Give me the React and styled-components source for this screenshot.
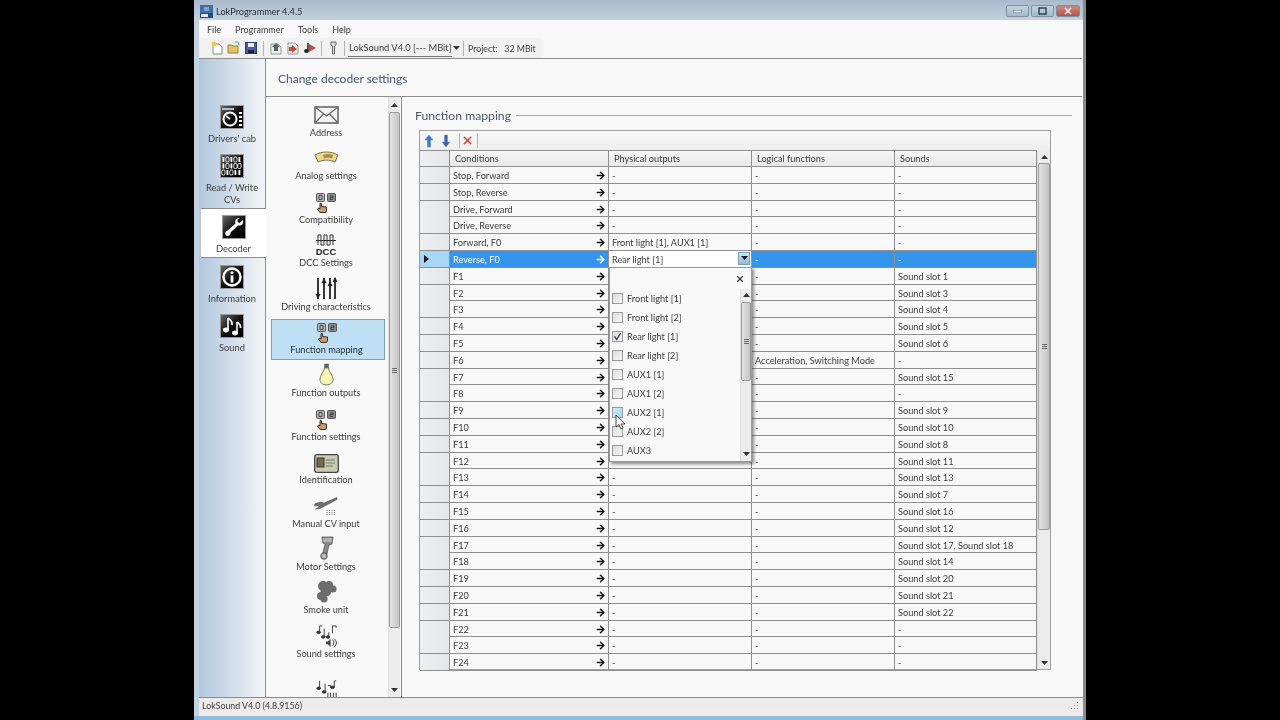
import styled, { createGlobalStyle } from 'styled-components'
import { ArrowRight, X } from 'lucide-react'

const Global = createGlobalStyle`
  html, body { margin: 0; padding: 0; background: #000; }
  body { font-family: Lato, "Open Sans", sans-serif; font-size: 9.2px; color: #3c3c3c; overflow: hidden; }
`

const Page = styled.div`
  width: 1280px;
  height: 720px;
  background: #000;
  display: flex;
  justify-content: center;
  filter: blur(0.35px);
`

const Window = styled.div`
  width: 892px;
  height: 720px;
  display: flex;
  flex-direction: column;
  background: linear-gradient(180deg, #a9bacd 0, #c3d1e0 20px);
  border-right: 3px solid #8a8a8a;
  box-sizing: border-box;
`

const TitleBar = styled.div`
  height: 20px;
  box-sizing: border-box;
  display: flex;
  align-items: center;
  padding: 3px 3px 0 6px;
  flex: none;
`

const TitleText = styled.div`
  margin-left: 3px;
  font-size: 9.2px;
  color: #26303c;
`

const WinButtons = styled.div`
  margin-left: auto;
  display: flex;
  gap: 2px;
  margin-top: -1px;
`

const WinButton = styled.div`
  width: ${p => (p.$close ? 24 : 23)}px;
  height: 12px;
  border: 1px solid #7d90a2;
  border-radius: 2px;
  box-sizing: border-box;
  background: ${p => (p.$close ? 'linear-gradient(180deg,#c98c84,#b3534a)' : 'linear-gradient(180deg,#c3d2e0,#a5b9cb)')};
  display: flex;
  align-items: center;
  justify-content: center;
`

const Inner = styled.div`
  flex: 1;
  margin: 0 0 4px 5px;
  display: flex;
  flex-direction: column;
  background: #f8f8f9;
  min-height: 0;
`

const MenuBar = styled.div`
  height: 18px;
  display: flex;
  align-items: center;
  gap: 14px;
  padding-left: 8px;
  flex: none;
  font-size: 9px;
`

const ToolStrip = styled.div`
  height: 20px;
  flex: none;
  display: flex;
  align-items: center;
  background: linear-gradient(90deg, #f1f1f1 0, #f1f1f1 342px, #f8f8f9 346px);
`

const ToolIcons = styled.div`
  display: flex;
  align-items: center;
  gap: 3px;
  padding-left: 11px;
`

const ToolSep = styled.div`
  width: 1px;
  height: 15px;
  background: #b4b4b4;
  flex: none;
  margin: 0 ${p => p.$r ?? 0}px 0 ${p => p.$l ?? 0}px;
`

const Combo = styled.div`
  margin-left: 3px;
  display: flex;
  align-items: center;
  gap: 1px;
  width: 112px;
  white-space: nowrap;
`

const ComboText = styled.div`
  width: 106px;
  height: 17px;
  line-height: 16px;
  border-bottom: 1px solid #777;
  box-sizing: border-box;
  padding-left: 1px;
  font-size: 9.3px;
`

const ProjectText = styled.span`
  font-size: 8.8px;
`

const Body = styled.div`
  flex: 1;
  display: flex;
  min-height: 0;
  margin-right: 1px;
  border-top: 1px solid #8c8c8c;
  background: linear-gradient(90deg, #b2c7de 0, #d3dfea 34px, #f2f5f8 66px);
`

const Nav = styled.div`
  width: 66px;
  flex: none;
  padding-top: 43px;
  display: flex;
  flex-direction: column;
  box-sizing: border-box;
`

const NavItem = styled.div`
  display: flex;
  flex-direction: column;
  align-items: center;
  text-align: center;
  height: ${p => p.$h}px;
  line-height: 12px;
  font-size: 9.3px;
  padding-top: ${p => p.$pad}px;
  box-sizing: border-box;
  margin-left: ${p => (p.$active ? 2 : 0)}px;
  margin-right: ${p => (p.$active ? -1 : 0)}px;
  position: relative;
  z-index: 1;
  ${p => p.$active && `
    background: #fff;
    border-top: 1px solid #8c8c8c;
    border-bottom: 1px solid #8c8c8c;
  `}
`

const NavLabel = styled.div`
  margin-top: 4px;
  width: 62px;
`

const MainCol = styled.div`
  flex: 1;
  display: flex;
  flex-direction: column;
  min-width: 0;
  background: #f8f8f9;
  border-left: 1px solid #8c8c8c;
`

const PageHeader = styled.div`
  height: 38px;
  flex: none;
  display: flex;
  align-items: center;
  padding: 2px 0 0 12px;
  box-sizing: border-box;
  font-size: 12px;
  color: #4a566c;
  border-bottom: 1px solid #8c8c8c;
`

const Split = styled.div`
  flex: 1;
  display: flex;
  min-height: 0;
`

const SettingsCol = styled.div`
  width: 136px;
  box-sizing: border-box;
  flex: none;
  display: flex;
  padding-right: 1px;
  border-right: 1px solid #8c8c8c;
  overflow: hidden;
  position: relative;
`

const SettingsList = styled.div`
  width: 122px;
  flex: none;
  padding: 5px 0 0 5px;
  display: flex;
  flex-direction: column;
  gap: 2.4px;
  box-sizing: border-box;
`

const SettingItem = styled.div`
  height: 41px;
  width: 114px;
  flex: none;
  box-sizing: border-box;
  display: flex;
  flex-direction: column;
  align-items: center;
  justify-content: flex-end;
  font-size: 9.2px;
  line-height: 12px;
  padding: 0 4px 4px 0;
  position: relative;
  ${p => p.$selected && `
    background: #bfdff5;
    border: 1px solid #7da2b8;
    padding: 0 3px 3px 0;
    color: #20303c;
  `}
`

const SettingIcon = styled.div`
  height: 24px;
  display: flex;
  align-items: flex-end;
  justify-content: center;
  margin-bottom: 1px;
`

const ScrollTrack = styled.div`
  width: ${p => p.$w}px;
  flex: none;
  display: flex;
  flex-direction: column;
  align-items: center;
  background: #ececec;
  border-left: 1px solid #dedede;
  box-sizing: border-box;
`

const ScrollBtn = styled.div`
  height: ${p => p.$h || 12}px;
  flex: none;
  width: 100%;
  display: flex;
  align-items: center;
  justify-content: center;
`

const ScrollGap = styled.div`
  flex: 1;
  width: 100%;
`

const Thumb = styled.div`
  flex: none;
  width: 100%;
  height: ${p => p.$h}px;
  background: linear-gradient(90deg, #e3e3e3, #c4c4c4);
  border: 1px solid #9a9a9a;
  border-radius: 2px;
  box-sizing: border-box;
  display: flex;
  align-items: center;
  justify-content: center;
`

const Grip = styled.div`
  width: 5px;
  height: 5px;
  border-top: 1px solid #666;
  border-bottom: 1px solid #666;
  position: relative;
  box-sizing: border-box;
  &::after {
    content: '';
    position: absolute;
    left: 0;
    right: 0;
    top: 1px;
    height: 1px;
    background: #666;
  }
`

const Content = styled.div`
  flex: 1;
  min-width: 0;
  padding: 9px 10px 0 13px;
  display: flex;
  flex-direction: column;
`

const GroupTitle = styled.div`
  display: flex;
  align-items: center;
  font-size: 12.2px;
  height: 18px;
  color: #4a566c;
  gap: 5px;
  &::after {
    content: '';
    flex: 1;
    height: 1px;
    background: #a8a8a8;
  }
`

const TableBox = styled.div`
  margin: 6px 0 0 4px;
  height: 540px;
  width: 632px;
  box-sizing: border-box;
  border: 1px solid #a0a0a0;
  background: #f1f1f1;
  display: flex;
  flex-direction: column;
`

const TableTools = styled.div`
  height: 19px;
  flex: none;
  display: flex;
  align-items: center;
  background: linear-gradient(180deg, #f8f8f8, #eeeeee);
`

const ToolBtn = styled.div`
  width: ${p => p.$w}px;
  flex: none;
  display: flex;
  align-items: center;
  justify-content: center;
`

const TableWrap = styled.div`
  flex: 1;
  display: flex;
  min-height: 0;
`

const Grid = styled.div`
  width: 617px;
  flex: none;
  background: #f8f8f9;
  border-top: 1px solid #8f8f8f;
`

const Row = styled.div`
  display: grid;
  grid-template-columns: 30px 159px 143px 143px 142px;
  height: ${p => (p.$head ? 16 : 16.8)}px;
  box-sizing: border-box;
  border-bottom: 1px solid #8f8f8f;
  color: ${p => (p.$active ? '#fff' : 'inherit')};
  background: ${p => (p.$active ? '#3595ec' : 'transparent')};
  line-height: 15px;
  font-size: 9.2px;
  position: relative;
`

const Cell = styled.div`
  border-right: 1px solid #8f8f8f;
  padding: 1px 0 0 3px;
  display: flex;
  align-items: center;
  justify-content: space-between;
  white-space: nowrap;
  position: relative;
  min-width: 0;
`

const HeadCell = styled(Cell)`
  background: linear-gradient(180deg, #f6f6f6, #e8e8e8);
  padding: 0 0 0 5px;
`

const RowHead = styled.div`
  border-right: 1px solid #8f8f8f;
  background: ${p => (p.$active ? '#a9d6f2' : 'linear-gradient(90deg,#eeeff0,#e4e6e7)')};
  display: flex;
  align-items: center;
  padding-left: 4px;
`

const CondArrow = styled(ArrowRight)`
  margin-right: 2px;
  flex: none;
  color: ${p => (p.$active ? '#fff' : '#111')};
`

const EditBox = styled.div`
  position: absolute;
  inset: 0 0 0 0;
  background: #fff;
  color: #3c3c3c;
  display: flex;
  align-items: center;
  padding: 1px 0 0 3px;
`

const EditBtn = styled.div`
  position: absolute;
  right: 1px;
  top: 1px;
  width: 12px;
  height: 13px;
  box-sizing: border-box;
  border: 1px solid #7a9db8;
  background: linear-gradient(180deg, #cfe5f4, #8dbbdc);
  display: flex;
  align-items: center;
  justify-content: center;
`

const Popup = styled.div`
  position: absolute;
  left: 0;
  top: 16px;
  width: 143px;
  height: 195px;
  background: #f8f8f9;
  border: 1px solid #9a9a9a;
  box-sizing: border-box;
  box-shadow: 2px 2px 3px rgba(0, 0, 0, 0.45);
  z-index: 5;
  color: #3c3c3c;
  display: flex;
  flex-direction: column;
`

const PopupTop = styled.div`
  height: 21px;
  flex: none;
  display: flex;
  justify-content: flex-end;
  align-items: center;
  padding: 2px 6px 0 0;
  box-sizing: border-box;
`

const PopupBody = styled.div`
  flex: 1;
  display: flex;
  min-height: 0;
`

const PopupList = styled.div`
  flex: 1;
  padding: 0 0 0 2px;
  display: flex;
  flex-direction: column;
  overflow: hidden;
`

const PopupItem = styled.div`
  height: 19px;
  flex: none;
  display: flex;
  align-items: center;
  gap: 4px;
`

const Check = styled.div`
  width: 11px;
  height: 11px;
  box-sizing: border-box;
  border: 1px solid #9b9b9b;
  background: ${p => (p.$hover ? 'linear-gradient(135deg,#cfe9f7,#a8d6ef)' : 'linear-gradient(135deg,#dcdcdc,#f6f6f6)')};
  flex: none;
  display: flex;
  align-items: center;
  justify-content: center;
`

const Cursor = styled.svg`
  position: absolute;
  left: 5px;
  top: 146px;
  z-index: 6;
`

const StatusBar = styled.div`
  height: 19px;
  flex: none;
  border-top: 1px solid #8c8c8c;
  background: linear-gradient(180deg, #ecebeb, #f3eaea);
  display: flex;
  align-items: center;
  padding: 0 0 3px 3px;
  box-sizing: border-box;
  font-size: 8.8px;
  position: relative;
`

const SizeGrip = styled.svg`
  margin-left: auto;
  margin-right: 4px;
`

const BottomEdge = styled.div`
  height: 4px;
  flex: none;
  margin-top: -4px;
  background: #8fbddb;
`

// --- drawings ---

const Tile = ({ children }) => (
  <svg width="24" height="24" viewBox="0 0 24 24">
    <defs>
      <linearGradient id="tile" x1="0" y1="0" x2="1" y2="1">
        <stop offset="0" stopColor="#6a6a6a" />
        <stop offset="0.5" stopColor="#111" />
        <stop offset="1" stopColor="#000" />
      </linearGradient>
    </defs>
    <rect x="0.5" y="0.5" width="23" height="23" fill="url(#tile)" stroke="#999" />
    {children}
  </svg>
)

const CabIcon = () => (
  <Tile>
    <rect x="2" y="3" width="12" height="2" fill="#bbb" />
    <circle cx="10" cy="14" r="6.5" fill="none" stroke="#fff" strokeWidth="2" />
    <path d="M10 14 L6 11" stroke="#fff" strokeWidth="1.6" />
    <path d="M19 8h3M19 12h3M19 16h3M19 20h3" stroke="#fff" strokeWidth="2" />
  </Tile>
)

const BinaryIcon = () => {
  const rows = ['10101', '10100', '01011']
  return (
    <Tile>
      {rows.map((r, y) =>
        r.split('').map((c, x) => (
          c === '1'
            ? <rect key={`${x}${y}`} x={2.5 + x * 4} y={3 + y * 6.5} width="1.8" height="5" fill="#fff" />
            : <rect key={`${x}${y}`} x={1.8 + x * 4} y={3 + y * 6.5} width="3.2" height="5" rx="1.2" fill="none" stroke="#fff" strokeWidth="0.9" />
        ))
      )}
    </Tile>
  )
}

const WrenchTile = () => (
  <Tile>
    <path d="M21 5 L17.5 8 L15.5 7 L15.5 4.5 L18 3 C14.5 2.5 12.5 5 13.5 8.5 L5 16 C2.5 16.5 2.5 20.5 5.5 21 C8 21 9 19 8.5 17.5 L16 10.5 C19.5 11 22 9 21 5 Z" fill="#fff" />
  </Tile>
)

const InfoTile = () => (
  <Tile>
    <circle cx="12" cy="12" r="8.5" fill="none" stroke="#fff" strokeWidth="2.4" />
    <circle cx="12" cy="7.8" r="1.5" fill="#fff" />
    <rect x="10.6" y="10.5" width="2.8" height="7" fill="#fff" />
  </Tile>
)

const SoundTile = () => (
  <Tile>
    <path d="M8 4 L8 15 M8 4 C10 6 13 7 12 11 M17 8 L17 18 M17 8 C19 10 21 10 20.5 14" stroke="#fff" strokeWidth="1.6" fill="none" />
    <ellipse cx="6" cy="16" rx="3" ry="2.4" fill="#fff" />
    <ellipse cx="15" cy="19" rx="3" ry="2.4" fill="#fff" />
  </Tile>
)

const Envelope = () => (
  <svg width="25" height="20" viewBox="0 0 25 20">
    <rect x="1" y="1" width="23" height="16" fill="#f4f4f4" stroke="#555" strokeWidth="1.4" />
    <path d="M1 1 L12.5 10 L24 1 M1 17 L9.5 8 M24 17 L15.5 8" fill="none" stroke="#666" strokeWidth="1.3" />
  </svg>
)

const AnalogIcon = () => (
  <svg width="25" height="18" viewBox="0 0 25 18">
    <path d="M1 4 C7 0 18 0 24 4 L21 11 C16 8.5 9 8.5 4 11 Z" fill="#e8dc8c" stroke="#77714a" />
    <path d="M9 4 C12 2.5 15 2.5 19 4 L18 7.5 C15 6.5 12 6.5 10 7.5 Z" fill="#a98d54" />
  </svg>
)

const FnIcon = () => (
  <svg width="20" height="20" viewBox="0 0 20 20">
    <rect x="0.5" y="0.5" width="8" height="8" rx="1" fill="#b5b5b5" stroke="#555" />
    <rect x="11.5" y="0.5" width="8" height="8" rx="1" fill="#8a8a8a" stroke="#555" />
    <path d="M3 2.5h3v4H3zM14 3h3M17 3v1.5h-3v2h3" stroke="#333" fill="none" strokeWidth="0.8" />
    <path d="M4 10.5 L5.5 10.5 L5.5 13.5 L10.5 14 L10.5 18 L9.5 19.5 L4 19.5 L1.5 16 L3 15 L4 16 Z" fill="#c99a6e" stroke="#3d2f25" />
  </svg>
)

const DccIcon = () => (
  <svg width="22" height="24" viewBox="0 0 22 24">
    <path d="M1 8.5 H21" stroke="#333" />
    <path d="M3 13 V3 H6 V13 H9 V3 H12 V13 H15 V3 H18 V13" fill="none" stroke="#333" />
    <text x="11" y="23" textAnchor="middle" fontFamily="Liberation Sans" fontWeight="700" fontSize="9.5" fill="#222">DCC</text>
  </svg>
)

const SlidersIcon = () => (
  <svg width="24" height="23" viewBox="0 0 24 23">
    <path d="M4 1 V22 M10 1 V22 M16 1 V22 M21 1 V22" stroke="#222" strokeWidth="1.8" />
    <path d="M1.5 17 L6.5 17 L4 22 Z M7.5 6 L12.5 6 L10 1 Z M13.5 9 L18.5 9 L16 4 Z M18.5 5 L23.5 5 L21 0 Z" fill="#222" />
  </svg>
)

const BulbIcon = () => (
  <svg width="15" height="23" viewBox="0 0 16 24">
    <rect x="5.5" y="0.5" width="5" height="5" fill="#666" />
    <path d="M6 5 L10 5 C10.5 9 15 13 15 17 C15 21 12 23 8 23 C4 23 1 21 1 17 C1 13 5.5 9 6 5 Z" fill="#f7f4b4" stroke="#6d6d52" />
  </svg>
)

const IdIcon = () => (
  <svg width="25" height="19" viewBox="0 0 25 19">
    <rect x="0.7" y="0.7" width="23.6" height="17.6" rx="2" fill="#c9ccb2" stroke="#444" strokeWidth="1.3" />
    <rect x="3" y="4" width="7" height="9" fill="#7a6a4a" stroke="#333" />
    <path d="M12 6h9M12 9h9M12 12h7" stroke="#777" />
  </svg>
)

const ManualIcon = () => (
  <svg width="24" height="20" viewBox="0 0 24 20">
    <path d="M23 0.5 L10 6 L7 5 L1 6.5 L0.5 9 L4 8.5 L5 10 L1.5 12 L6 11.5 L9 10 L23 2.5 Z" fill="#6e6e6e" stroke="#444" strokeWidth="0.5" />
    <path d="M13 13v6M15.5 13v6M18 13v6M20.5 13v6" stroke="#777" strokeDasharray="1 1" />
  </svg>
)

const PistonIcon = () => (
  <svg width="15" height="24" viewBox="0 0 15 24">
    <path d="M3 1 H14 L13 8 L10 9 L8 18 L4 17 L6 8 L4 7 Z" fill="#8a8a8a" stroke="#444" strokeWidth="0.7" />
    <circle cx="5" cy="20" r="3.2" fill="#bbb" stroke="#444" />
    <path d="M4 3h9M4 5h9" stroke="#ddd" />
  </svg>
)

const SmokeIcon = () => (
  <svg width="22" height="23" viewBox="0 0 22 23">
    <g fill="#6d6d6d">
      <circle cx="8" cy="6" r="5" />
      <circle cx="14" cy="5" r="4" />
      <circle cx="18" cy="9" r="3.6" />
      <circle cx="11" cy="11" r="5.5" />
      <circle cx="6" cy="16" r="4" />
      <circle cx="9" cy="19" r="3.6" />
    </g>
  </svg>
)

const NotesIcon = () => (
  <svg width="23" height="22" viewBox="0 0 23 24">
    <g stroke="#333" fill="#333" strokeWidth="1">
      <path d="M4 1v6M4 1h3M9 4v9M18 1v8M18 1h4v2M14 8v5" fill="none" />
      <ellipse cx="3" cy="8" rx="2" ry="1.4" />
      <ellipse cx="8" cy="13" rx="2" ry="1.4" />
      <ellipse cx="13" cy="13" rx="2" ry="1.4" />
    </g>
    <path d="M11 18h2l3-3v9l-3-3h-2z" fill="#444" />
    <path d="M18 16c2 2 2 5 0 7M20 15c3 3 3 6 0 9" stroke="#333" fill="none" />
  </svg>
)

const NotesMixIcon = () => (
  <svg width="23" height="22" viewBox="0 0 23 24">
    <g stroke="#333" fill="#333" strokeWidth="1">
      <path d="M4 1v8M20 1v7M20 1h2" fill="none" />
      <ellipse cx="3" cy="9" rx="2" ry="1.4" />
      <ellipse cx="9" cy="13" rx="2" ry="1.4" />
      <ellipse cx="18" cy="8" rx="2" ry="1.4" />
      <path d="M10 4v8M13 6h3v3" fill="none" />
      <path d="M13 14v10M16 14v10M19 14v10M22 14v10" fill="none" />
    </g>
  </svg>
)

const Tri = ({ down, color = '#333' }) => (
  <svg width="7" height="4" viewBox="0 0 7 4">
    <path d={down ? 'M0 0H7L3.5 4Z' : 'M0 4H7L3.5 0Z'} fill={color} />
  </svg>
)

const Tb = ({ children, w = 14 }) => (
  <svg width={w} height="14" viewBox={`0 0 ${w} 14`}>{children}</svg>
)

const AppIcon = () => (
  <svg width="13" height="13" viewBox="0 0 13 13">
    <rect width="13" height="13" fill="#3f6f9f" />
    <rect y="8" width="13" height="5" fill="#1f4f77" />
    <rect x="4" y="2" width="5" height="4" fill="#7fa6c9" />
    <rect x="1" y="9" width="7" height="3" fill="#dfe9f2" />
  </svg>
)

const navItems = [
  { label: "Drivers' cab", icon: <CabIcon />, h: 49, pad: 3 },
  { label: 'Read / Write CVs', icon: <BinaryIcon />, h: 57, pad: 3 },
  { label: 'Decoder', icon: <WrenchTile />, h: 50, pad: 6, active: true },
  { label: 'Information', icon: <InfoTile />, h: 50, pad: 7 },
  { label: 'Sound', icon: <SoundTile />, h: 50, pad: 6 },
]

const settings = [
  { label: 'Address', icon: <Envelope /> },
  { label: 'Analog settings', icon: <AnalogIcon /> },
  { label: 'Compatibility', icon: <FnIcon /> },
  { label: 'DCC Settings', icon: <DccIcon /> },
  { label: 'Driving characteristics', icon: <SlidersIcon /> },
  { label: 'Function mapping', icon: <FnIcon />, selected: true },
  { label: 'Function outputs', icon: <BulbIcon /> },
  { label: 'Function settings', icon: <FnIcon /> },
  { label: 'Identification', icon: <IdIcon /> },
  { label: 'Manual CV input', icon: <ManualIcon /> },
  { label: 'Motor Settings', icon: <PistonIcon /> },
  { label: 'Smoke unit', icon: <SmokeIcon /> },
  { label: 'Sound settings', icon: <NotesIcon /> },
  { label: '', icon: <NotesMixIcon /> },
]

const rows = [
  ['Stop, Forward', '-', '-', '-'],
  ['Stop, Reverse', '-', '-', '-'],
  ['Drive, Forward', '-', '-', '-'],
  ['Drive, Reverse', '-', '-', '-'],
  ['Forward, F0', 'Front light [1], AUX1 [1]', '-', '-'],
  ['Reverse, F0', 'Rear light [1]', '-', '-'],
  ['F1', '', '-', 'Sound slot 1'],
  ['F2', '', '-', 'Sound slot 3'],
  ['F3', '', '-', 'Sound slot 4'],
  ['F4', '', '-', 'Sound slot 5'],
  ['F5', '', '-', 'Sound slot 6'],
  ['F6', '', 'Acceleration, Switching Mode', '-'],
  ['F7', '', '-', 'Sound slot 15'],
  ['F8', '', '-', '-'],
  ['F9', '', '-', 'Sound slot 9'],
  ['F10', '', '-', 'Sound slot 10'],
  ['F11', '', '-', 'Sound slot 8'],
  ['F12', '', '-', 'Sound slot 11'],
  ['F13', '-', '-', 'Sound slot 13'],
  ['F14', '-', '-', 'Sound slot 7'],
  ['F15', '-', '-', 'Sound slot 16'],
  ['F16', '-', '-', 'Sound slot 12'],
  ['F17', '-', '-', 'Sound slot 17, Sound slot 18'],
  ['F18', '-', '-', 'Sound slot 14'],
  ['F19', '-', '-', 'Sound slot 20'],
  ['F20', '-', '-', 'Sound slot 21'],
  ['F21', '-', '-', 'Sound slot 22'],
  ['F22', '-', '-', '-'],
  ['F23', '-', '-', '-'],
  ['F24', '-', '-', '-'],
]

const outputs = ['Front light [1]', 'Front light [2]', 'Rear light [1]', 'Rear light [2]', 'AUX1 [1]', 'AUX1 [2]', 'AUX2 [1]', 'AUX2 [2]', 'AUX3']

const App = () => (
  <>
    <Global />
    <Page>
      <Window>
        <TitleBar>
          <AppIcon />
          <TitleText>LokProgrammer 4.4.5</TitleText>
          <WinButtons>
            <WinButton>
              <svg width="9" height="3"><rect width="9" height="3" fill="#e8eef4" stroke="#5a6c7c" /></svg>
            </WinButton>
            <WinButton>
              <svg width="9" height="8"><rect x="1" y="1" width="7" height="6" fill="none" stroke="#33465a" strokeWidth="1.5" /></svg>
            </WinButton>
            <WinButton $close>
              <X size={10} strokeWidth={4} color="#f4ecec" />
            </WinButton>
          </WinButtons>
        </TitleBar>
        <Inner>
          <MenuBar>
            <span>File</span>
            <span>Programmer</span>
            <span>Tools</span>
            <span>Help</span>
          </MenuBar>
          <ToolStrip>
            <ToolIcons>
              <Tb><path d="M3 3h6l3 3v7H3z" fill="#fff" stroke="#8a8a6a" /><circle cx="4" cy="3" r="2.5" fill="#f2c94c" /></Tb>
              <Tb><path d="M1 12V4h4l1 1h5v7z" fill="#e5c36a" stroke="#9a7a30" /><path d="M8 1l3 0 1 3" fill="none" stroke="#5a8" /></Tb>
              <Tb><rect x="1.5" y="1.5" width="11" height="11" fill="#4a5ea8" stroke="#2a3a78" /><rect x="4" y="2" width="6" height="4" fill="#eee" /><rect x="4" y="9" width="6" height="3" fill="#223" /></Tb>
              <ToolSep $l={2} $r={2} />
              <Tb><path d="M2 3h7l3 3v7H2z" fill="#eee" stroke="#999" /><path d="M7 2l4 4H9v4H5V6H3z" fill="#4a6a5a" /></Tb>
              <Tb><path d="M2 2h7l3 3v8H2z" fill="#eee" stroke="#999" /><path d="M6 4l5 4-5 4V10H3V6h3z" fill="#c84a3a" /></Tb>
              <Tb><path d="M5 2v7" stroke="#222" strokeWidth="1.5" /><ellipse cx="3.5" cy="10" rx="2.5" ry="2" fill="#222" /><path d="M6 3l7 4-7 4z" fill="#c84a3a" /></Tb>
              <ToolSep $l={1} $r={1} />
              <Tb><path d="M5 1h5v3L8.5 5v8H6.5V5L5 4z" fill="#ddd" stroke="#666" /></Tb>
              <ToolSep $l={1} />
            </ToolIcons>
            <Combo>
              <ComboText>LokSound V4.0 [--- MBit]</ComboText>
              <Tri down />
            </Combo>
            <ToolSep $l={3} $r={4} />
            <ProjectText>Project:&nbsp;&nbsp; 32 MBit</ProjectText>
          </ToolStrip>
          <Body>
            <Nav>
              {navItems.map(n => (
                <NavItem key={n.label} $active={n.active} $h={n.h} $pad={n.pad}>
                  {n.icon}
                  <NavLabel>{n.label}</NavLabel>
                </NavItem>
              ))}
            </Nav>
            <MainCol>
              <PageHeader>Change decoder settings</PageHeader>
              <Split>
                <SettingsCol>
                  <SettingsList>
                    {settings.map((s, i) => (
                      <SettingItem key={i} $selected={s.selected}>
                        <SettingIcon>{s.icon}</SettingIcon>
                        {s.label}
                      </SettingItem>
                    ))}
                  </SettingsList>
                  <ScrollTrack $w={12}>
                    <ScrollBtn $h={15}><Tri /></ScrollBtn>
                    <Thumb $h={516}><Grip /></Thumb>
                    <ScrollGap />
                    <ScrollBtn $h={14}><Tri down /></ScrollBtn>
                  </ScrollTrack>
                </SettingsCol>
                <Content>
                  <GroupTitle>Function mapping</GroupTitle>
                  <TableBox>
                    <TableTools>
                      <ToolBtn $w={17}><Tb w={12}><path d="M6 1L10 6H7.5V13H4.5V6H2Z" fill="#3d78c4" stroke="#5c8cc8" strokeWidth="0.5" /></Tb></ToolBtn>
                      <ToolBtn $w={17}><Tb w={12}><path d="M6 13L10 8H7.5V1H4.5V8H2Z" fill="#3d5fae" stroke="#7a94c8" strokeWidth="0.5" /></Tb></ToolBtn>
                      <ToolSep $l={5} />
                      <ToolBtn $w={14}><X size={13} strokeWidth={2.6} color="#d23a30" /></ToolBtn>
                      <ToolSep $l={3} />
                    </TableTools>
                    <TableWrap>
                      <Grid>
                        <Row $head>
                          <RowHead />
                          <HeadCell>Conditions</HeadCell>
                          <HeadCell>Physical outputs</HeadCell>
                          <HeadCell>Logical functions</HeadCell>
                          <HeadCell>Sounds</HeadCell>
                        </Row>
                        {rows.map(([cond, phys, log, snd], i) => {
                          const active = i === 5
                          return (
                            <Row key={cond} $active={active}>
                              <RowHead $active={active}>
                                {active && <svg width="5" height="8"><path d="M0 0L5 4L0 8Z" fill="#111" /></svg>}
                              </RowHead>
                              <Cell>
                                {cond}
                                <CondArrow size={11} strokeWidth={3.2} $active={active} />
                              </Cell>
                              <Cell>
                                {phys}
                                {active && (
                                  <>
                                    <EditBox>{phys}</EditBox>
                                    <EditBtn><Tri down color="#111" /></EditBtn>
                                    <Popup>
                                      <PopupTop><X size={10} strokeWidth={2.6} color="#333" /></PopupTop>
                                      <PopupBody>
                                        <PopupList>
                                          {outputs.map(o => (
                                            <PopupItem key={o}>
                                              <Check $hover={o === 'AUX2 [1]'}>
                                                {o === 'Rear light [1]' && (
                                                  <svg width="9" height="9" viewBox="0 0 9 9"><path d="M1.5 4.5L3.8 7.5L7.5 1" fill="none" stroke="#445" strokeWidth="1.5" /></svg>
                                                )}
                                              </Check>
                                              {o}
                                            </PopupItem>
                                          ))}
                                        </PopupList>
                                        <ScrollTrack $w={11}>
                                          <ScrollBtn $h={13}><Tri /></ScrollBtn>
                                          <Thumb $h={79}><Grip /></Thumb>
                                          <ScrollGap />
                                          <ScrollBtn $h={13}><Tri down /></ScrollBtn>
                                        </ScrollTrack>
                                      </PopupBody>
                                      <Cursor width="11" height="17" viewBox="0 0 11 17">
                                        <path d="M1 1V13L4 10.5L6 15L8 14L6 10H10Z" fill="#fff" stroke="#333" strokeWidth="0.9" />
                                      </Cursor>
                                    </Popup>
                                  </>
                                )}
                              </Cell>
                              <Cell>{log}</Cell>
                              <Cell>{snd}</Cell>
                            </Row>
                          )
                        })}
                      </Grid>
                      <ScrollTrack $w={13}>
                        <ScrollBtn $h={13}><Tri /></ScrollBtn>
                        <Thumb $h={367}><Grip /></Thumb>
                        <ScrollGap />
                        <ScrollBtn $h={13}><Tri down /></ScrollBtn>
                      </ScrollTrack>
                    </TableWrap>
                  </TableBox>
                </Content>
              </Split>
            </MainCol>
          </Body>
          <StatusBar>
            LokSound V4.0 (4.8.9156)
            <SizeGrip width="9" height="9" viewBox="0 0 9 9">
              <path d="M7 1h1v1H7zM4 4h1v1H4zM7 4h1v1H7zM1 7h1v1H1zM4 7h1v1H4zM7 7h1v1H7z" fill="#888" />
            </SizeGrip>
          </StatusBar>
        </Inner>
        <BottomEdge />
      </Window>
    </Page>
  </>
)

export default App
